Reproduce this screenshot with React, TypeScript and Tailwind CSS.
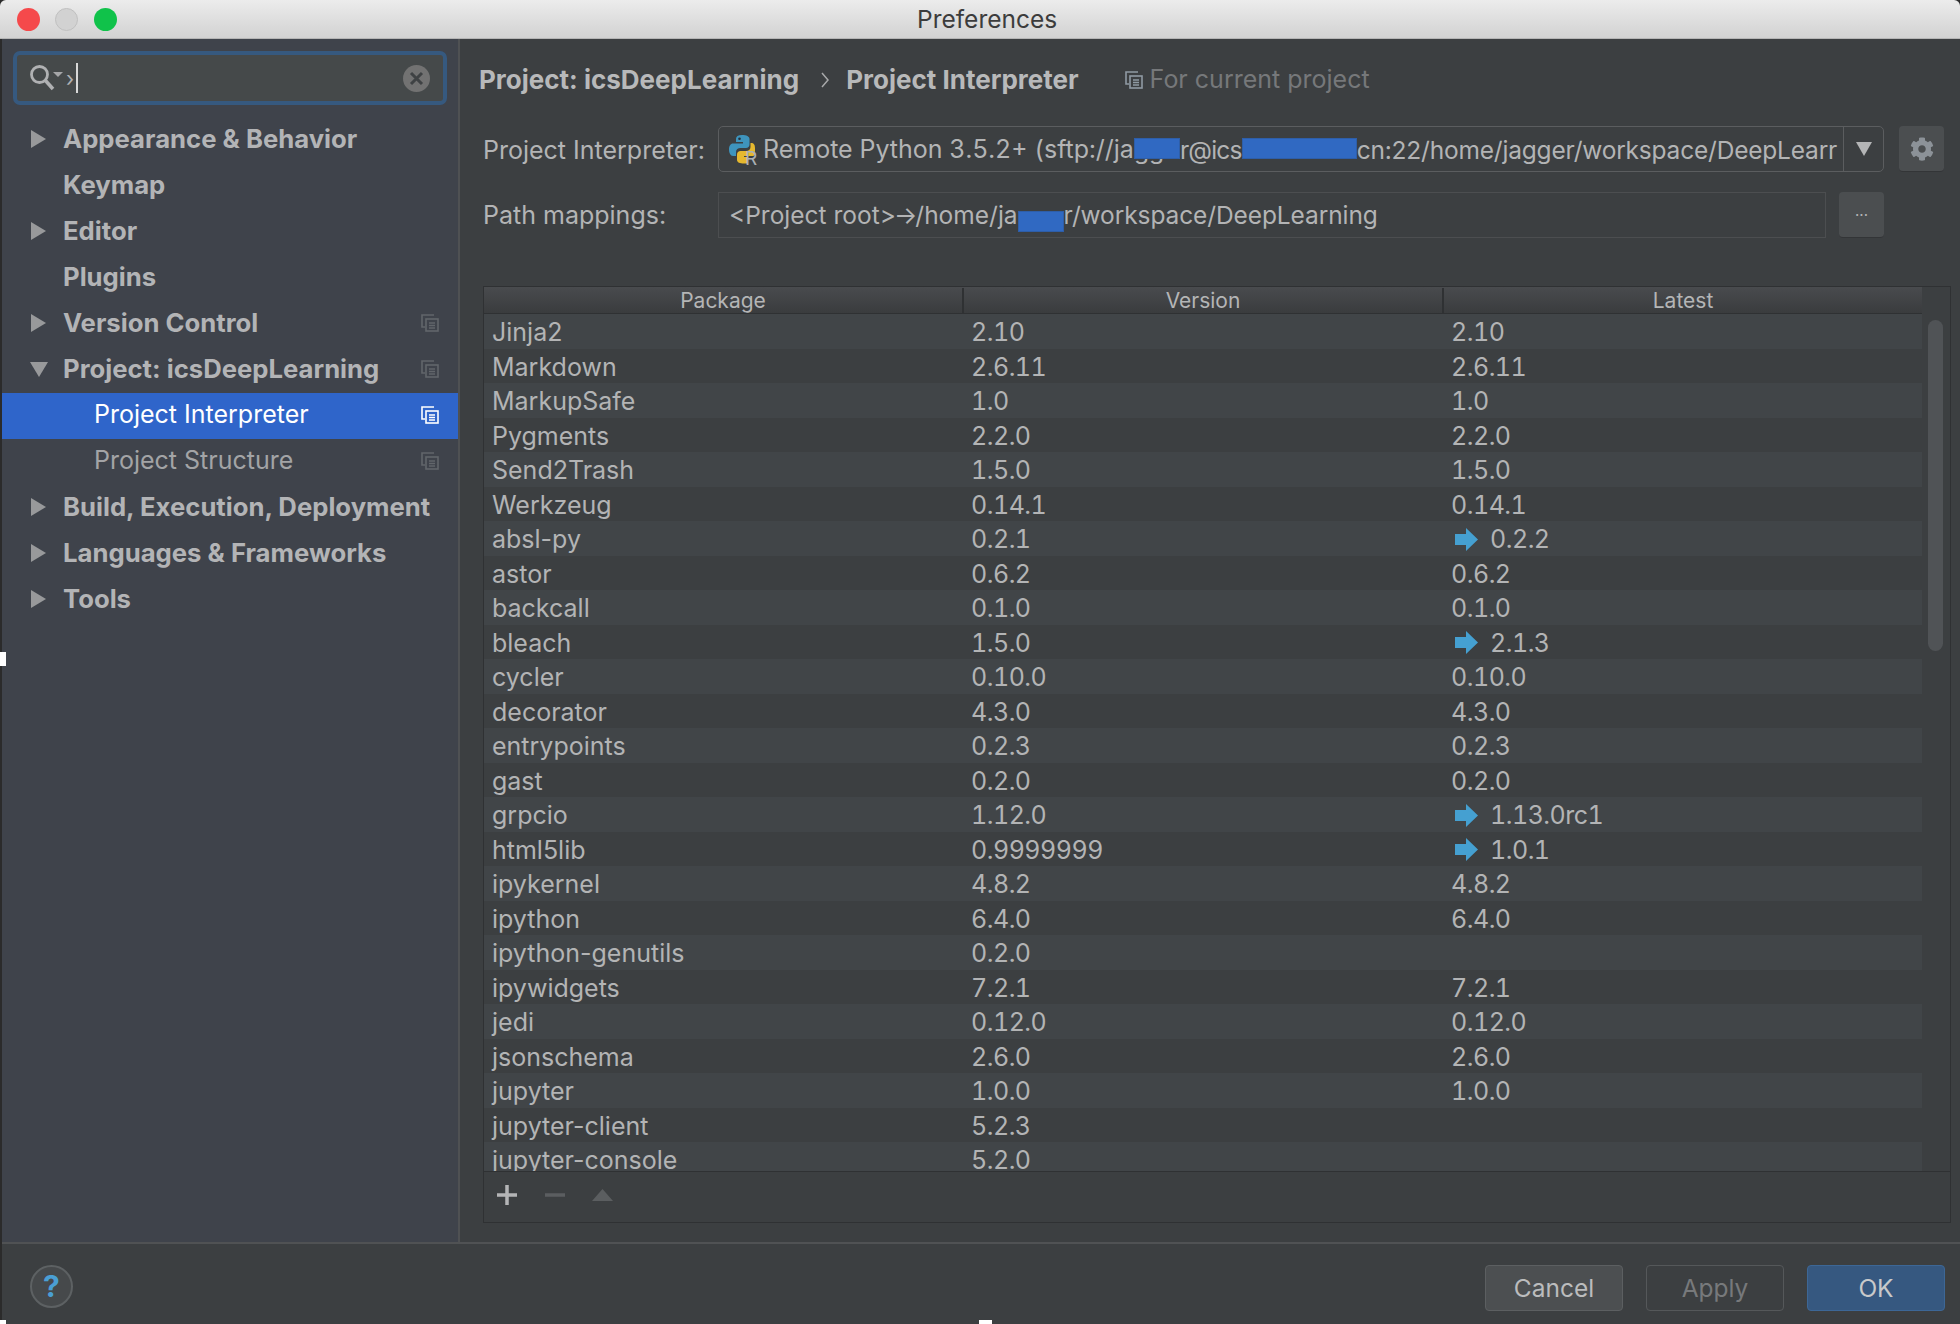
import { FaCog } from "react-icons/fa";

const FONT = "font-['Inter','Liberation_Sans',sans-serif]";

const packages: [string, string, string, boolean?][] = [
  ["Jinja2", "2.10", "2.10"],
  ["Markdown", "2.6.11", "2.6.11"],
  ["MarkupSafe", "1.0", "1.0"],
  ["Pygments", "2.2.0", "2.2.0"],
  ["Send2Trash", "1.5.0", "1.5.0"],
  ["Werkzeug", "0.14.1", "0.14.1"],
  ["absl-py", "0.2.1", "0.2.2", true],
  ["astor", "0.6.2", "0.6.2"],
  ["backcall", "0.1.0", "0.1.0"],
  ["bleach", "1.5.0", "2.1.3", true],
  ["cycler", "0.10.0", "0.10.0"],
  ["decorator", "4.3.0", "4.3.0"],
  ["entrypoints", "0.2.3", "0.2.3"],
  ["gast", "0.2.0", "0.2.0"],
  ["grpcio", "1.12.0", "1.13.0rc1", true],
  ["html5lib", "0.9999999", "1.0.1", true],
  ["ipykernel", "4.8.2", "4.8.2"],
  ["ipython", "6.4.0", "6.4.0"],
  ["ipython-genutils", "0.2.0", ""],
  ["ipywidgets", "7.2.1", "7.2.1"],
  ["jedi", "0.12.0", "0.12.0"],
  ["jsonschema", "2.6.0", "2.6.0"],
  ["jupyter", "1.0.0", "1.0.0"],
  ["jupyter-client", "5.2.3", ""],
  ["jupyter-console", "5.2.0", ""],
];

const tree: { label: string; arrow?: "right" | "down"; copy?: boolean; child?: boolean; selected?: boolean }[] = [
  { label: "Appearance & Behavior", arrow: "right" },
  { label: "Keymap" },
  { label: "Editor", arrow: "right" },
  { label: "Plugins" },
  { label: "Version Control", arrow: "right", copy: true },
  { label: "Project: icsDeepLearning", arrow: "down", copy: true },
  { label: "Project Interpreter", child: true, copy: true, selected: true },
  { label: "Project Structure", child: true, copy: true },
  { label: "Build, Execution, Deployment", arrow: "right" },
  { label: "Languages & Frameworks", arrow: "right" },
  { label: "Tools", arrow: "right" },
];

function CopyIcon({ color, size = 18 }: { color: string; size?: number }) {
  return (
    <svg width={size} height={size} viewBox="0 0 18 18" fill="none" stroke={color} strokeWidth="1.6">
      <path d="M13 1H1v12h3" />
      <rect x="5" y="5" width="12" height="12" />
      <path d="M8 9h6M8 11.5h6M8 14h6" strokeWidth="1.3" />
    </svg>
  );
}

function PythonIcon() {
  return (
    <svg width="30" height="32" viewBox="0 0 30 32">
      <path d="M13 1c-4 0-6 1.500-6 4v3h7v1.500H4C1.500 9.500 0 12 0 15.500S1.500 22 4 22h3v-4c0-2.500 2-4 4.500-4H17c2 0 3.500-1.500 3.500-3.500V5c0-2.500-3-4-7.500-4z" fill="#3e94bd" />
      <circle cx="10.500" cy="4.800" r="1.300" fill="#26303a" />
      <path d="M21.500 9v4c0 2.500-2 4-4.500 4h-5.500C9.500 17 8 18.500 8 20.500V26c0 2.500 3 3.500 7 3.500h3V23h-3v-1h9c1 0 2-1 2-3v-5c0-3-1-5-4-5z" fill="#e5b82f" />
      <text x="16" y="31" fontSize="19" fontFamily="Inter" fill="#aab0b5">R</text>
    </svg>
  );
}

function UpdateArrow() {
  return (
    <svg width="23" height="23" viewBox="0 0 23 23" className="shrink-0">
      <path d="M0 6h11V0l12 11.500L11 23v-6H0z" fill="#45a0d1" />
    </svg>
  );
}

function Redact({ width, hidden, low }: { width: number; hidden?: string; low?: boolean }) {
  return (
    <span className="relative inline-block" style={{ width }}>
      <span>{hidden ?? "\u00a0"}</span>
      <span className={`absolute left-0 right-0 h-[21px] border border-[#2e5ea8] bg-[#3069c2] ${low ? "top-[14px]" : "top-[6px]"}`} />
    </span>
  );
}

function SidebarRow({ item }: { item: (typeof tree)[number] }) {
  return (
    <div
      className={`flex h-[46px] items-center pb-[2px] ${item.selected ? "bg-[#2f65ca]" : ""} ${item.child ? "pl-[92px]" : "pl-[28px]"} pr-[19px]`}
    >
      {!item.child && (
        <span className="flex w-[33px] shrink-0">
          {item.arrow === "right" && (
            <svg width="16" height="18" viewBox="0 0 16 18">
              <path d="M1 0l15 9-15 9z" fill="#98999b" />
            </svg>
          )}
          {item.arrow === "down" && (
            <svg width="18" height="16" viewBox="0 0 18 16">
              <path d="M0 1h18l-9 15z" fill="#98999b" />
            </svg>
          )}
        </span>
      )}
      <span
        className={`flex-1 whitespace-nowrap ${item.child ? "text-[25px] font-normal" : "text-[25.700px] font-bold"} ${item.selected ? "text-white" : item.child ? "text-[#a3a4a6]" : "text-[#b3b4b6]"}`}
      >
        {item.label}
      </span>
      {item.copy && <CopyIcon color={item.selected ? "#ffffff" : "#62666b"} />}
    </div>
  );
}

function Sidebar() {
  return (
    <aside className="flex w-[456px] shrink-0 flex-col bg-[#3f434b] pt-[12px]">
      <div className="mx-[11px] mb-[12px] flex h-[54px] items-center rounded-[7px] border-[4px] border-[#36597f] bg-[#45494a] pl-[13px] pr-[13px]">
        <svg width="34" height="26" viewBox="0 0 34 26" fill="none" className="shrink-0">
          <circle cx="9.500" cy="9.500" r="8" stroke="#b0b1b3" strokeWidth="2.800" />
          <path d="M15 15l8 9" stroke="#b0b1b3" strokeWidth="3.500" />
          <path d="M23 7h10l-5 5z" fill="#a5a6a8" />
        </svg>
        <span className="ml-[2px] text-[21px] leading-none text-[#b0b1b3]">›</span>
        <span className="ml-[2px] h-[30px] w-[1.500px] bg-[#d8d8d8]" />
        <span className="flex-1" />
        <svg width="27" height="27" viewBox="0 0 27 27">
          <circle cx="13.500" cy="13.500" r="13.500" fill="#727272" />
          <path d="M8 8l11 11M19 8L8 19" stroke="#3f4244" strokeWidth="3" />
        </svg>
      </div>
      {tree.map((item) => (
        <SidebarRow key={item.label} item={item} />
      ))}
    </aside>
  );
}

function PackageTable() {
  return (
    <div className="relative h-[937px] w-[1468px] border border-[#2f3133]">
      <div className="flex h-[27px] w-[1438px] border-b border-[#2f3133] bg-gradient-to-b from-[#494b4e] to-[#3a3c3e] pt-[1px] text-[21px] text-[#b4b5b6]">
        <div className="flex w-[480px] items-center justify-center border-r-2 border-[#2f3133]">Package</div>
        <div className="flex w-[480px] items-center justify-center border-r-2 border-[#2f3133]">Version</div>
        <div className="flex w-[478px] items-center justify-center">Latest</div>
      </div>
      <div className="h-[857px] w-[1438px] overflow-hidden">
        {packages.map(([name, version, latest, update], i) => (
          <div
            key={name}
            className={`grid h-[34.500px] grid-cols-[479px_480px_479px] items-center pt-[2px] text-[25px] leading-[32px] text-[#b3b4b5] ${i % 2 === 0 ? "bg-[#414548]" : "bg-[#3c3f41]"}`}
          >
            <span className="pl-[8px]">{name}</span>
            <span className="pl-[8px] tracking-[-0.5px] tabular-nums">{version}</span>
            <span className={`flex items-center tracking-[-0.5px] tabular-nums ${update ? "pl-[12px]" : "pl-[8px]"}`}>
              {update && <UpdateArrow />}
              <span className={update ? "ml-[12px]" : ""}>{latest}</span>
            </span>
          </div>
        ))}
      </div>
      <div className="flex h-[50px] items-start border-t border-[#2f3133]">
        <svg width="140" height="40" viewBox="0 0 140 40" className="ml-[13px] mt-[13px]">
          <path d="M10 0v20M0 10h20" stroke="#b4b5b6" strokeWidth="3.500" />
          <path d="M48 10h20" stroke="#5b5e60" strokeWidth="3.500" />
          <path d="M95 16l10.500-12L116 16z" fill="#5b5e60" />
        </svg>
      </div>
      {/* scrollbar sits over the list's right gutter */}
      <div className="absolute left-[1444px] top-[33px] h-[331px] w-[15px] rounded-full bg-[#505356]" />
    </div>
  );
}

function Content() {
  return (
    <main className="flex flex-1 flex-col bg-[#3c3f41] pl-[23px]">
      <div className="-ml-[4px] flex h-[78px] items-center pt-[3px] text-[25px] text-[#b8b9ba]">
        <span className="text-[26px] font-bold">Project: icsDeepLearning</span>
        <svg width="10" height="18" viewBox="0 0 10 18" fill="none" className="ml-[21px] mr-[16px]">
          <path d="M2 2l6 7-6 7" stroke="#a8a9aa" strokeWidth="1.500" />
        </svg>
        <span className="text-[26px] font-bold">Project Interpreter</span>
        <span className="ml-[46px] mr-[7px]">
          <CopyIcon color="#8f9aa3" size={18} />
        </span>
        <span className="text-[#76787a]">For current project</span>
      </div>
      <div className="mt-[9px] flex h-[46px] items-center">
        <span className="w-[235px] pt-[3px] text-[25px] text-[#b3b4b5]">Project Interpreter:</span>
        <div className="flex h-[46px] w-[1166px] items-center rounded-[5px] border border-[#5b5d5f]">
          <div className="flex flex-1 items-center overflow-hidden whitespace-nowrap pl-[10px] pt-[2px] text-[24.500px] text-[#b3b4b5]">
            <PythonIcon />
            <span className="ml-[4px] text-[25px] tabular-nums">Remote Python 3.5.2+ (sftp://ja</span>
            <Redact width={46} hidden="gg" />
            <span className="tracking-[-0.8px]">r@ics</span>
            <Redact width={115} />
            <span className="tracking-[-0.2px]">cn:22/home/jagger/workspace/DeepLearr</span>
          </div>
          <div className="flex h-full w-[40px] shrink-0 items-center justify-center border-l border-[#5b5d5f]">
            <svg width="16" height="14" viewBox="0 0 16 14">
              <path d="M0 0h16L8 14z" fill="#b4b5b6" />
            </svg>
          </div>
        </div>
        <div className="ml-[15px] flex h-[46px] w-[45px] items-center justify-center rounded-[4px] border-b border-[#333537] bg-[#4b4e50]">
          <FaCog className="h-[24px] w-[24px] text-[#8c9298]" />
        </div>
      </div>
      <div className="mt-[20px] flex h-[46px] items-center">
        <span className="w-[235px] pt-[1px] text-[25px] text-[#b3b4b5]">Path mappings:</span>
        <div className="flex h-[46px] w-[1108px] items-center whitespace-nowrap border border-[#4c4e50] pl-[10px] text-[24.500px] text-[#b3b4b5]">
          <span>{"<Project root>"}</span>
          <span className="-mx-[2px]">→</span>
          <span>{"/home/ja"}</span>
          <Redact width={46} low />
          <span className="tracking-[-0.1px]">r/workspace/DeepLearning</span>
        </div>
        <div className="ml-[13px] flex h-[46px] w-[45px] items-center justify-center rounded-[4px] border-b border-[#333537] bg-[#4b4e50] pb-[6px] text-[15px] text-[#b4b5b6]">
          ...
        </div>
      </div>
      <div className="mt-[48px]">
        <PackageTable />
      </div>
    </main>
  );
}

function Footer() {
  const btn = "flex h-[46px] w-[138px] items-center justify-center rounded-[4px] text-[24.500px]";
  return (
    <footer className="flex h-[82px] items-start border-t-2 border-[#505254] bg-[#3c3f41] pl-[28px] pr-[15px] pt-[21px]">
      <div className="flex h-[43px] w-[43px] items-center justify-center rounded-full border-2 border-[#5d6163] bg-[#46494b] text-[30px] font-bold text-[#4a9fd4]">
        ?
      </div>
      <div className="ml-auto flex gap-[23px]">
        <button className={`${btn} border border-[#5c5f61] bg-[#4c4f51] text-[#bbbcbd]`}>Cancel</button>
        <button className={`${btn} border border-[#55585a] text-[#77797b]`}>Apply</button>
        <button className={`${btn} border border-[#3d6796] bg-[#365880] text-[#c8c9ca]`}>OK</button>
      </div>
    </footer>
  );
}

export default function App() {
  return (
    <div className={`relative h-[1324px] w-[1960px] overflow-hidden bg-[#2b2b2b] pl-[2px] ${FONT}`}>
      <div className="-ml-[2px] flex h-[39px] items-center rounded-t-[6px] border-b border-[#b5b5b5] bg-gradient-to-b from-[#ececec] to-[#d2d2d2] pl-[17px]">
        <span className="h-[23px] w-[23px] rounded-full bg-[#f5494b]" />
        <span className="ml-[15px] h-[23px] w-[23px] rounded-full border border-[#c0c0c0] bg-[#d2d2d2]" />
        <span className="ml-[16px] h-[23px] w-[23px] rounded-full bg-[#10c24a]" />
        <span className="ml-[800px] text-[24.500px] text-[#3c3c3c]">Preferences</span>
      </div>
      <div className="flex h-[1203px]">
        <Sidebar />
        <div className="w-[2px] bg-[#4f5153]" />
        <Content />
      </div>
      <Footer />
      {/* crop handles left on the screenshot */}
      <div className="absolute left-0 top-[652px] h-[14px] w-[6px] bg-white" />
      <div className="absolute left-0 top-[1320px] h-[4px] w-[6px] bg-white" />
      <div className="absolute left-[979px] top-[1320px] h-[4px] w-[13px] bg-white" />
    </div>
  );
}
